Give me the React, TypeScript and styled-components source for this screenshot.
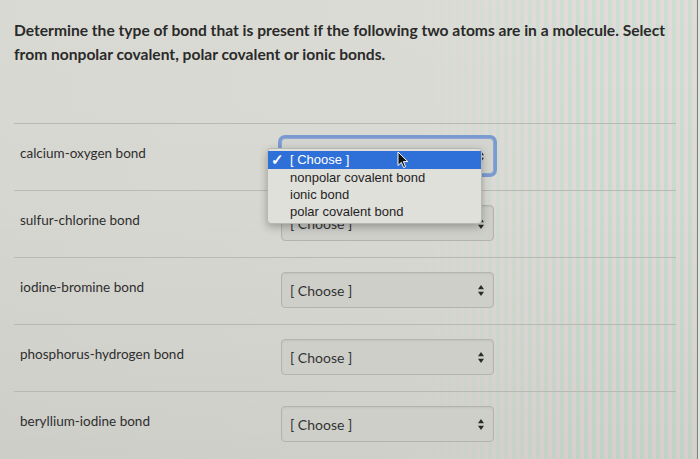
import React from "react";
import styled, { createGlobalStyle, css } from "styled-components";

const GlobalStyle = createGlobalStyle`
  html, body { margin: 0; padding: 0; }
  body { background: #e0e4de; }
  * { box-sizing: border-box; }
`;

const Page = styled.div`
  position: relative;
  width: 698px;
  min-height: 459px;
  padding: 18px 0 0 14px;
  border-right: 1px solid #80807c;
  overflow: hidden;
  background:
    linear-gradient(180deg, rgba(255,255,255,0.06) 0%, rgba(0,0,0,0) 40%, rgba(0,0,0,0.045) 100%),
    linear-gradient(90deg, #d7d7d1 0%, #d9d9d3 60%, rgba(217,218,211,0.5) 73%, rgba(217,218,211,0) 86%),
    repeating-linear-gradient(90deg, #c8dccd 0 4px, #e2d7d9 4px 8px);
  font-family: Lato, "Open Sans", sans-serif;
  color: #2c2c2c;
`;

const Prompt = styled.p`
  margin: 0;
  width: 670px;
  font-size: 15.6px;
  font-weight: 700;
  line-height: 24px;
  color: #2a2a2a;
`;

const Table = styled.div`
  margin-top: 57px;
  width: 662px;
  display: flex;
  flex-direction: column;
`;

const Row = styled.div`
  display: grid;
  grid-template-columns: 261px 213px;
  align-items: start;
  height: 67px;
  padding: 14px 0 0 6px;
  border-top: 1px solid #b7b9b3;
`;

const Label = styled.span`
  margin-top: 7px;
  font-size: 13.5px;
  line-height: 17px;
  color: #2e2e2e;
`;

const SelectWrap = styled.div`
  position: relative;
`;

const SelectBox = styled.div<{ $focused?: boolean }>`
  position: relative;
  height: 36px;
  display: flex;
  align-items: center;
  justify-content: space-between;
  padding: 1px 9px 0 8px;
  border-radius: 4px;
  background: #cfcfca;
  border: 1px solid #b3b4ae;
  box-shadow: inset 0 1px 2px rgba(0,0,0,0.06);
  font-size: 14px;
  color: #333;
  ${(p) =>
    p.$focused &&
    css`
      border: 1px solid #8aa6d4;
      box-shadow: 0 0 0 3px #7b9bd0;
      background: #d3d4d0;
    `}
`;

const Arrows = styled.svg`
  width: 6px;
  height: 11px;
  flex: none;
`;

const Menu = styled.div`
  position: absolute;
  left: -14px;
  top: 10px;
  width: 215px;
  padding: 2px 0 3px;
  background: #e0e0db;
  border: 1px solid #b9b9b4;
  border-radius: 4px;
  box-shadow: 0 3px 8px rgba(0,0,0,0.28);
  font-family: "Liberation Sans", Arial, sans-serif;
  font-size: 13px;
  color: #1f1f1f;
  z-index: 2;
`;

const Option = styled.div<{ $active?: boolean }>`
  position: relative;
  height: 17px;
  line-height: 17px;
  padding-left: 22px;
  ${(p) =>
    p.$active &&
    css`
      height: 18px;
      line-height: 18px;
      background: #2f6fd8;
      color: #fff;
    `}
`;

const Check = styled.span`
  position: absolute;
  left: 3px;
  top: 0;
  font-size: 15px;
  font-weight: 700;
`;

const Cursor = styled.svg`
  position: absolute;
  left: 129px;
  top: 0px;
  width: 12px;
  height: 18px;
  z-index: 3;
`;

const rows = [
  "calcium-oxygen bond",
  "sulfur-chlorine bond",
  "iodine-bromine bond",
  "phosphorus-hydrogen bond",
  "beryllium-iodine bond",
];

const options = ["nonpolar covalent bond", "ionic bond", "polar covalent bond"];

const UpDown = () => (
  <Arrows viewBox="0 0 6 11">
    <path d="M3 0 L6 4.2 L0 4.2 Z" fill="#2a2a2a" />
    <path d="M3 11 L6 6.8 L0 6.8 Z" fill="#2a2a2a" />
  </Arrows>
);

export default function App() {
  return (
    <>
      <GlobalStyle />
      <Page>
        <Prompt>
          Determine the type of bond that is present if the following two atoms are in a molecule. Select
          from nonpolar covalent, polar covalent or ionic bonds.
        </Prompt>
        <Table>
          {rows.map((r, i) => (
            <Row key={r}>
              <Label>{r}</Label>
              <SelectWrap>
                <SelectBox $focused={i === 0}>
                  <span>[ Choose ]</span>
                  <UpDown />
                </SelectBox>
                {i === 0 && (
                  <Menu>
                    <Option $active>
                      <Check>✓</Check>[ Choose ]
                      <Cursor viewBox="0 0 12 18">
                        <path
                          d="M1 1 L1 14.5 L4.3 11.4 L6.6 16.6 L8.6 15.7 L6.4 10.6 L10.8 10.6 Z"
                          fill="#111"
                          stroke="#fff"
                          strokeWidth="1"
                          strokeLinejoin="round"
                        />
                      </Cursor>
                    </Option>
                    {options.map((o) => (
                      <Option key={o}>{o}</Option>
                    ))}
                  </Menu>
                )}
              </SelectWrap>
            </Row>
          ))}
        </Table>
      </Page>
    </>
  );
}
